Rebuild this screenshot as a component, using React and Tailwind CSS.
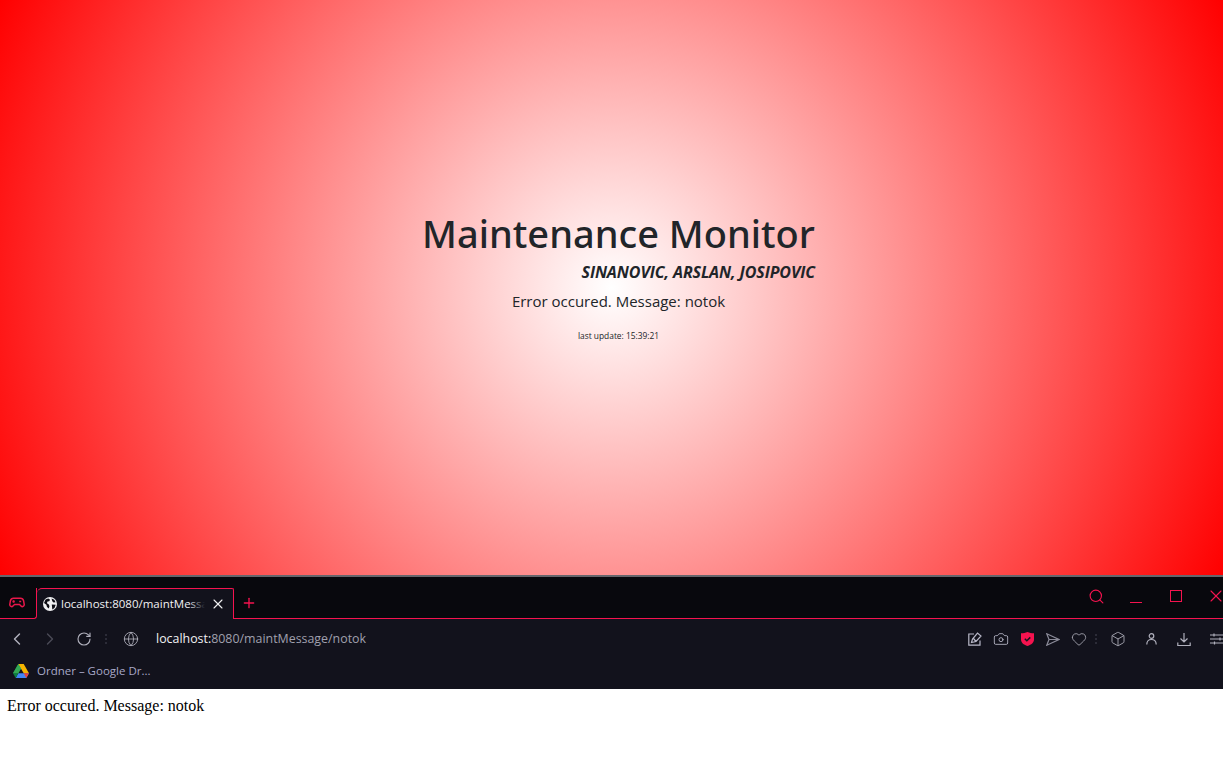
import React from "react";
import { Box, Camera, ChevronLeft, ChevronRight, Globe, Heart, Plus, RotateCw, Search, X } from "lucide-react";

const segoe = "font-['Open_Sans','Noto_Sans',sans-serif]";

function GamepadIcon() {
  return (
    <svg width="16" height="12" viewBox="0 0 16 12" fill="none" stroke="#e8174a" strokeWidth="1.5">
      <path d="M4.500 1.200h7c1.700 0 2.700 1 3.100 2.600l.6 3.600c.3 1.900-1.900 3-3.200 1.500L10.500 7.500h-5L4 8.900c-1.300 1.500-3.500.4-3.200-1.500l.6-3.600C1.800 2.200 2.800 1.200 4.500 1.200z" />
      <path d="M3.400 4.500h2.400M4.600 3.300v2.400M10.200 4.500h2" />
    </svg>
  );
}

function WorldFilled() {
  return (
    <svg width="14" height="14" viewBox="0 0 14 14">
      <circle cx="7" cy="7" r="7" fill="#f1f1f3" />
      <path d="M2.500 2.500l2.800-.9 1.800 1.200-.9 1.500-1.700.3-.6 1.600 1.700 1 .9 1.700-.7 2.700-1.800-1.500-.6-2.400L1 6zM8.500 1.500l2.800 1.300 1.200 2.400-2 .4-1.200-1.400zM8.800 7.500l3.900.3-1.200 3.200-2.200 1.500z" fill="#0c0c13" />
    </svg>
  );
}

function DriveIcon() {
  return (
    <svg width="16" height="14" viewBox="0 0 16 14">
      <path d="M5.300 0h5.400l-5.400 9.300H0z" fill="#0f9d58" />
      <path d="M5.300 0h5.400L16 9.300h-5.300z" fill="#f4b400" />
      <path d="M2.700 14L5.300 9.300H16L13.300 14z" fill="#4285f4" />
      <path d="M0 9.300L2.700 14l2.600-4.700z" fill="#0b8043" />
      <path d="M5.300 0l2.700 4.600L5.300 9.300H0z" fill="#34a853" />
      <path d="M10.700 9.300H16L13.300 14l-2.600-4.700z" fill="#ea4335" />
    </svg>
  );
}

function EditIcon() {
  return (
    <svg width="14" height="14" viewBox="0 0 14 14" fill="none" stroke="#b8b8c8" strokeWidth="1.200">
      <path d="M6 2H.8v11.200H12V8.500" />
      <path d="M3.500 10.500l1-3.500L9.500 1l3.500 3-5 5.500zM5.500 6.500l2.500 3" />
    </svg>
  );
}

function ShieldIcon() {
  return (
    <svg width="13" height="14" viewBox="0 0 13 14">
      <path d="M6.500 0c2 1 4 1.300 6.500 1.300v6.200c0 3-2.500 5.200-6.500 6.500C2.500 12.700 0 10.500 0 7.500V1.300C2.500 1.300 4.500 1 6.500 0z" fill="#f5134f" />
      <path d="M3.800 6.800l2 2 3.500-3.400" fill="none" stroke="#14141e" strokeWidth="1.500" />
    </svg>
  );
}

function SendIcon() {
  return (
    <svg width="14" height="13" viewBox="0 0 14 13" fill="none" stroke="#8a8a98" strokeWidth="1.200">
      <path d="M.800.800L13 6.500.800 12.200 3 6.500zM3 6.500h10" />
    </svg>
  );
}

function PersonIcon() {
  return (
    <svg width="11" height="12" viewBox="0 0 11 12" fill="none" stroke="#b0b0bc" strokeWidth="1.200">
      <circle cx="5.500" cy="3" r="2.300" />
      <path d="M.800 11.500c0-3.500 2-5 4.700-5s4.700 1.500 4.700 5" />
    </svg>
  );
}

function DownloadIcon() {
  return (
    <svg width="14" height="13" viewBox="0 0 14 13" fill="none" stroke="#b0b0bc" strokeWidth="1.200">
      <path d="M7 0v8.500M3.500 5.500L7 9l3.500-3.500M.800 9.500v3h12.400v-3" />
    </svg>
  );
}

function SettingsIcon() {
  return (
    <svg width="14" height="12" viewBox="0 0 14 12" fill="none" stroke="#b0b0bc" strokeWidth="1.200">
      <path d="M0 2h14M0 6h14M0 10h14M4 .5v3M10 4.500v3M4.500 8.500v3" />
    </svg>
  );
}

function DotsDivider() {
  return (
    <div className="flex flex-col gap-[2px]">
      <div className="w-[2px] h-[2px] bg-[#2c2c38]" />
      <div className="w-[2px] h-[2px] bg-[#2c2c38]" />
      <div className="w-[2px] h-[2px] bg-[#2c2c38]" />
    </div>
  );
}

export default function App() {
  return (
    <div className="w-[1223px] h-[766px] overflow-hidden flex flex-col bg-white">
      {/* app page */}
      <main className={`h-[575px] flex items-center justify-center pl-[14px] pb-[24px] bg-[radial-gradient(circle,#ffffff,#ff0000)] text-[#212529] ${segoe}`}>
        <div className="w-[393px] flex flex-col">
          <h1 className="text-[38px] leading-[48px] font-medium text-center whitespace-nowrap font-['Noto_Sans',sans-serif]">
            Maintenance Monitor
          </h1>
          <p className="mt-[5px] text-[16px] leading-[20px] font-bold italic text-right tracking-[-0.1px] whitespace-nowrap">
            SINANOVIC, ARSLAN, JOSIPOVIC
          </p>
          <p className="mt-[7px] text-[15px] leading-[24px] text-center">
            Error occured. Message: notok
          </p>
          <p className="mt-[16px] text-[8.400px] leading-[14px] text-center">last update: 15:39:21</p>
        </div>
      </main>

      {/* browser chrome */}
      <div className="h-[2px] bg-[#66666c]" />
      <div className={`h-[112px] flex flex-col ${segoe}`}>
        <div className="h-[42px] bg-[#08080d] flex items-end relative">
          <div className="w-[37px] h-[31px] pl-[9px] flex items-center border-b border-r border-[#f5134f] rounded-br-[3px]">
            <GamepadIcon />
          </div>
          <div className="w-[197px] h-[31px] flex items-center pl-[6px] bg-[#12121c] border border-l-0 border-b-0 border-[#f5134f] rounded-tl-[5px] rounded-tr-[2px] relative">
            <WorldFilled />
            <span className="ml-[4px] w-[144px] overflow-hidden whitespace-nowrap text-[11.500px] text-[#f1f1f3]">
              localhost:8080/maintMessage/notok
            </span>
            <div className="absolute left-[152px] top-0 w-[16px] h-full bg-gradient-to-r from-transparent to-[#12121c]" />
            <X size={16} strokeWidth={1.600} className="ml-[5px] text-[#f1f1f3] shrink-0" />
          </div>
          <div className="flex-1 h-[31px] flex items-center pl-[7px] border-b border-[#f5134f]">
            <Plus size={16} strokeWidth={2} color="#f5134f" />
          </div>
          {/* window buttons */}
          <div className="absolute right-[-13px] top-0 h-[41px] pb-[3px] flex items-center text-[#f5134f]">
            <div className="w-[40px] flex justify-center"><Search size={17} strokeWidth={1.600} /></div>
            <div className="w-[40px] flex justify-center"><div className="w-[12px] h-[1px] mt-[12px] bg-[#f5134f]" /></div>
            <div className="w-[40px] flex justify-center"><div className="w-[12px] h-[12px] border border-[#f5134f]" /></div>
            <div className="w-[40px] flex justify-center"><X size={20} strokeWidth={1.300} /></div>
          </div>
        </div>

        <div className="h-[40px] bg-[#12121c] flex items-center pl-[7px]">
          <ChevronLeft size={20} strokeWidth={1.700} className="text-[#b0b0bc]" />
          <ChevronRight size={20} strokeWidth={1.700} className="ml-[13px] text-[#4a4a56]" />
          <RotateCw size={16} strokeWidth={1.700} className="ml-[16px] text-[#b0b0bc]" />
          <div className="ml-[13px]"><DotsDivider /></div>
          <Globe size={16} strokeWidth={1.300} className="ml-[16px] text-[#b0b0bc]" />
          <span className="ml-[17px] text-[12.400px] text-[#a0a0ae] whitespace-nowrap">
            <span className="text-[#f1f1f3]">localhost:</span>8080/maintMessage/notok
          </span>
          <div className="ml-auto flex items-center -mr-[9px]">
            <div className="w-[26px] flex justify-center"><EditIcon /></div>
            <div className="w-[26px] flex justify-center"><Camera size={16} strokeWidth={1.300} className="text-[#b8b8c8]" /></div>
            <div className="w-[26px] flex justify-center"><ShieldIcon /></div>
            <div className="w-[26px] flex justify-center"><SendIcon /></div>
            <div className="w-[26px] flex justify-center"><Heart size={16} strokeWidth={1.300} className="text-[#a8a8b4]" /></div>
            <div className="w-[8px] flex justify-center"><DotsDivider /></div>
            <div className="w-[36px] flex justify-center"><Box size={16} strokeWidth={1.300} className="text-[#b0b0bc]" /></div>
            <div className="w-[30px] flex justify-center"><PersonIcon /></div>
            <div className="w-[36px] flex justify-center"><DownloadIcon /></div>
            <div className="w-[30px] flex justify-center"><SettingsIcon /></div>
          </div>
        </div>

        <div className="h-[30px] bg-[#12121c] flex items-center pl-[13px] pb-[6px]">
          <DriveIcon />
          <span className="ml-[8px] text-[11.500px] text-[#a8a8c8]">Ordner – Google Dr...</span>
        </div>
      </div>

      {/* response body */}
      <div className="flex-1 bg-white pl-[7px] pt-[8px] text-[16px] leading-[18px] text-black font-['Liberation_Serif',serif]">
        Error occured. Message: notok
      </div>
    </div>
  );
}
